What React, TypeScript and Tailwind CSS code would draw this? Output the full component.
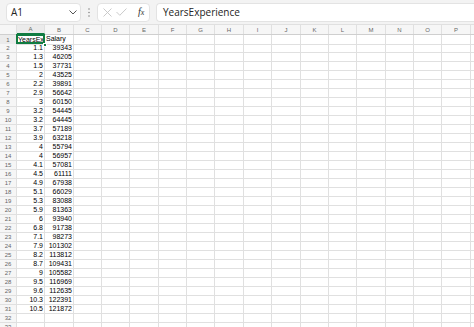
import React from "react";

const cols = ["A","B","C","D","E","F","G","H","I","J","K","L","M","N","O","P"];
const data: [string, string][] = [
  ["YearsExperience","Salary"],
  ["1.1","39343"],["1.3","46205"],["1.5","37731"],["2","43525"],["2.2","39891"],
  ["2.9","56642"],["3","60150"],["3.2","54445"],["3.2","64445"],["3.7","57189"],
  ["3.9","63218"],["4","55794"],["4","56957"],["4.1","57081"],["4.5","61111"],
  ["4.9","67938"],["5.1","66029"],["5.3","83088"],["5.9","81363"],["6","93940"],
  ["6.8","91738"],["7.1","98273"],["7.9","101302"],["8.2","113812"],["8.7","109431"],
  ["9","105582"],["9.5","116969"],["9.6","112635"],["10.3","122391"],["10.5","121872"],
  ["",""],["",""],
];

const gridCols =
  "grid grid-cols-[17px_28px_29px_28px_28px_29px_28px_28px_29px_28px_29px_28px_28px_29px_28px_28px_29px_1fr]";

export default function App() {
  return (
    <div className="w-[474px] h-[327px] overflow-hidden bg-white" style={{ fontFamily: '"Liberation Sans", Arial, sans-serif' }}>
      {/* formula bar */}
      <div className="h-[25px] bg-[#f3f3f3] flex items-center pl-[6px] border-b border-[#e0e0e0]" style={{ fontFamily: '"Open Sans", sans-serif' }}>
        <div className="w-[75px] h-[19px] bg-white rounded-[4px] border border-[#e3e3e3] flex items-center justify-between pl-[4px] pr-[3px]">
          <span className="text-[10px] text-[#242424] leading-none">A1</span>
          <svg width="8" height="5" viewBox="0 0 8 5"><path d="M0.5 0.5 L4 4 L7.5 0.5" fill="none" stroke="#555" strokeWidth="1" /></svg>
        </div>
        <div className="w-[16px] flex justify-center">
          <svg width="2" height="9" viewBox="0 0 2 9"><circle cx="1" cy="1" r="0.8" fill="#888"/><circle cx="1" cy="4.5" r="0.8" fill="#888"/><circle cx="1" cy="8" r="0.8" fill="#888"/></svg>
        </div>
        <div className="w-[53px] h-[19px] bg-white rounded-[4px] border border-[#e3e3e3] flex items-center pl-[5px]">
          <svg width="9" height="9" viewBox="0 0 9 9"><path d="M0.5 0.5 L8.5 8.5 M8.5 0.5 L0.5 8.5" stroke="#c4c4c4" strokeWidth="0.9" /></svg>
          <svg className="ml-[4px]" width="11" height="8" viewBox="0 0 11 8"><path d="M0.5 4 L3.8 7.3 L10.5 0.5" fill="none" stroke="#c4c4c4" strokeWidth="0.9" /></svg>
          <span className="ml-[11px] text-[10px] italic text-[#333] leading-none" style={{ fontFamily: '"Liberation Serif", serif' }}>f<span className="text-[8px]">x</span></span>
        </div>
        <div className="ml-[6px] flex-1 h-[19px] bg-white rounded-l-[4px] border border-r-0 border-[#e3e3e3] flex items-center pl-[6px]">
          <span className="text-[10px] text-[#242424] leading-none">YearsExperience</span>
        </div>
      </div>
      {/* column header */}
      <div className={`${gridCols} h-[10px] bg-[#f6f6f6] border-b border-[#cfcfcf]`}>
        <div className="border-r border-[#e0e0e0]" />
        {cols.map((c) => (
          <div key={c} className={`flex items-center justify-center text-[6px] leading-none text-[#666] border-r border-[#e0e0e0] ${c === "A" ? "bg-[#ebebeb] border-b border-b-[#107c41]" : ""}`}>{c}</div>
        ))}
        <div />
      </div>
      {/* rows */}
      {data.map((r, i) => (
        <div key={i} className={`${gridCols} h-[9px]`}>
          <div className={`flex items-center justify-center text-[6px] leading-none text-[#666] border-r border-b border-[#e0e0e0] ${i === 0 ? "bg-[#ebebeb]" : "bg-[#f6f6f6]"}`}>{i + 1}</div>
          {cols.map((c, j) => {
            const v = j === 0 ? r[0] : j === 1 ? r[1] : "";
            const isText = i === 0;
            if (i === 0 && j === 0) {
              return (
                <div key={c} className="relative border-r border-b border-[#e0e0e0]">
                  <div className="absolute -left-[1px] -top-[1px] w-[29px] h-[10px] border-2 border-[#107c41] z-10" />
                  <div className="absolute right-[-3px] bottom-[-3px] w-[4px] h-[4px] bg-[#107c41] border border-white z-20" />
                  <div className="h-full overflow-hidden whitespace-nowrap pl-[1px] text-[7px] leading-[9px] text-black">{v}</div>
                </div>
              );
            }
            return (
              <div key={c} className={`overflow-hidden whitespace-nowrap border-r border-b border-[#e0e0e0] text-[7px] leading-[8px] text-black ${isText ? "text-left pl-[1px]" : "text-right pr-[1px]"}`}>{v}</div>
            );
          })}
          <div className="border-b border-[#e0e0e0]" />
        </div>
      ))}
    </div>
  );
}
